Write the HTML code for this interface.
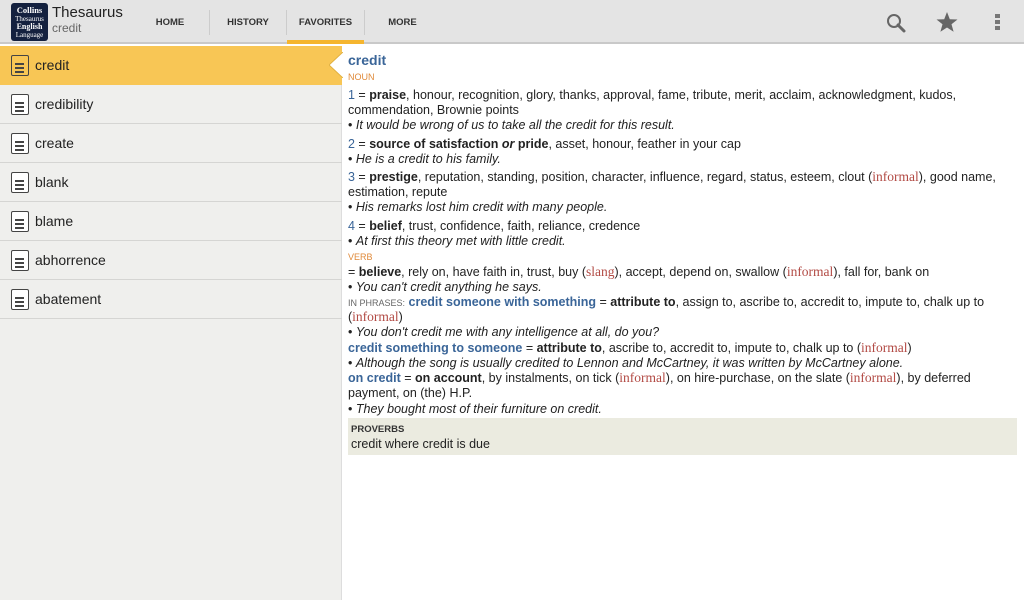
<!DOCTYPE html>
<html><head><meta charset="utf-8"><style>
*{margin:0;padding:0;box-sizing:border-box}
body{width:1024px;height:600px;overflow:hidden;font-family:"Liberation Sans",sans-serif;background:#fff;position:relative;color:#222}
.top{position:absolute;left:0;top:0;width:1024px;height:44px;background:#e4e4e4;border-bottom:2px solid #c9c9c9}
.logo{position:absolute;left:11px;top:3px;width:37px;height:38px;background:#14213f;border-radius:3px;color:#fff;font-family:"Liberation Serif",serif;text-align:center;line-height:8px;font-size:7px;padding-top:3px}
.tab{position:absolute;top:1px;height:44px;line-height:44px;font-size:9.5px;font-weight:bold;color:#333;text-align:center}
.sep{position:absolute;top:10px;width:1px;height:25px;background:#ccc}
.left{position:absolute;left:0;top:46px;width:342px;height:554px;background:#efefed;border-right:1px solid #ddd}
.row{position:absolute;left:0;width:342px;height:39px;border-bottom:1px solid #d5d5d3;font-size:14px;line-height:38px;padding-left:35px;color:#222}
.ic{position:absolute;left:11px;top:9px;width:18px;height:21px;border:1.5px solid #444;border-radius:2px;background:#fff}
.ic i{position:absolute;left:3px;width:9px;height:1.5px;background:#444}
.ln{position:absolute;left:348px;white-space:nowrap;font-size:12.5px;line-height:16px;color:#222;margin-top:1px}
.b{color:#3a6598}
.inf{font-family:"Liberation Serif",serif;color:#b24a44;font-size:13.5px}
.pos{color:#e08a3a}
em{font-style:italic}
</style></head><body>
<div class="top">
<div class="logo"><b style="font-size:8.5px">Collins</b><br>Thesaurus<br><b style="font-size:8px">English</b><br>Language</div>
<div style="position:absolute;left:52px;top:4px;font-size:15px;color:#222">Thesaurus</div>
<div style="position:absolute;left:52px;top:21px;font-size:12px;color:#666">credit</div>
<div class="tab" style="left:135px;width:70px">HOME</div>
<div class="sep" style="left:209px"></div>
<div class="tab" style="left:210px;width:76px">HISTORY</div>
<div class="sep" style="left:286px"></div>
<div class="tab" style="left:287px;width:77px">FAVORITES</div>
<div style="position:absolute;left:287px;top:40px;width:77px;height:4px;background:#f5b52e"></div>
<div class="sep" style="left:364px"></div>
<div class="tab" style="left:365px;width:75px">MORE</div>
<svg style="position:absolute;left:885px;top:12px" width="22" height="22" viewBox="0 0 22 22"><circle cx="9" cy="9" r="6" fill="none" stroke="#666" stroke-width="2"/><path d="M13 13L19 19" stroke="#666" stroke-width="3" stroke-linecap="round"/></svg>
<svg style="position:absolute;left:935px;top:11px" width="24" height="22" viewBox="0 0 24 22"><path d="M12 1L14.8 8.2 22.5 8.5 16.5 13.3 18.6 20.8 12 16.5 5.4 20.8 7.5 13.3 1.5 8.5 9.2 8.2Z" fill="#666"/></svg>
<div style="position:absolute;left:995px;top:14px;width:5px;height:4px;background:#777"></div>
<div style="position:absolute;left:995px;top:20px;width:5px;height:4px;background:#777"></div>
<div style="position:absolute;left:995px;top:26px;width:5px;height:4px;background:#777"></div>
</div>
<div class="left">
<div class="row" style="top:0;background:#f8c655;border-bottom:none">credit<div class="ic" style="background:#f8c655"><i style="top:7px"></i><i style="top:11px"></i><i style="top:15px"></i></div></div>
<div class="row" style="top:39px">credibility<div class="ic"><i style="top:7px"></i><i style="top:11px"></i><i style="top:15px"></i></div></div>
<div class="row" style="top:78px">create<div class="ic"><i style="top:7px"></i><i style="top:11px"></i><i style="top:15px"></i></div></div>
<div class="row" style="top:117px">blank<div class="ic"><i style="top:7px"></i><i style="top:11px"></i><i style="top:15px"></i></div></div>
<div class="row" style="top:156px">blame<div class="ic"><i style="top:7px"></i><i style="top:11px"></i><i style="top:15px"></i></div></div>
<div class="row" style="top:195px">abhorrence<div class="ic"><i style="top:7px"></i><i style="top:11px"></i><i style="top:15px"></i></div></div>
<div class="row" style="top:234px">abatement<div class="ic"><i style="top:7px"></i><i style="top:11px"></i><i style="top:15px"></i></div></div>
</div>
<svg style="position:absolute;left:329px;top:52px" width="14" height="26"><path d="M14 0L0 13 14 26Z" fill="#fff"/><path d="M14 0L0 13 14 26" fill="none" stroke="#e0b040" stroke-width="1"/></svg>
<div class="ln" style="top:51px;font-size:14px;font-weight:bold" ><span class="b">credit</span></div>
<div class="ln pos" style="top:68px;font-size:9px">NOUN</div>
<div class="ln" style="top:86px"><span class="b">1</span> = <b>praise</b>, honour, recognition, glory, thanks, approval, fame, tribute, merit, acclaim, acknowledgment, kudos,</div>
<div class="ln" style="top:101px">commendation, Brownie points</div>
<div class="ln" style="top:116px">• <em>It would be wrong of us to take all the credit for this result.</em></div>
<div class="ln" style="top:135px"><span class="b">2</span> = <b>source of satisfaction <em>or</em> pride</b>, asset, honour, feather in your cap</div>
<div class="ln" style="top:150px">• <em>He is a credit to his family.</em></div>
<div class="ln" style="top:168px"><span class="b">3</span> = <b>prestige</b>, reputation, standing, position, character, influence, regard, status, esteem, clout (<span class="inf">informal</span>), good name,</div>
<div class="ln" style="top:183px">estimation, repute</div>
<div class="ln" style="top:198px">• <em>His remarks lost him credit with many people.</em></div>
<div class="ln" style="top:217px"><span class="b">4</span> = <b>belief</b>, trust, confidence, faith, reliance, credence</div>
<div class="ln" style="top:232px">• <em>At first this theory met with little credit.</em></div>
<div class="ln pos" style="top:248px;font-size:9px">VERB</div>
<div class="ln" style="top:263px">= <b>believe</b>, rely on, have faith in, trust, buy (<span class="inf">slang</span>), accept, depend on, swallow (<span class="inf">informal</span>), fall for, bank on</div>
<div class="ln" style="top:278px">• <em>You can't credit anything he says.</em></div>
<div class="ln" style="top:293px"><span style="font-size:9px;color:#666">IN PHRASES:</span> <b class="b">credit someone with something</b> = <b>attribute to</b>, assign to, ascribe to, accredit to, impute to, chalk up to</div>
<div class="ln" style="top:308px">(<span class="inf">informal</span>)</div>
<div class="ln" style="top:323px">• <em>You don't credit me with any intelligence at all, do you?</em></div>
<div class="ln" style="top:339px"><b class="b">credit something to someone</b> = <b>attribute to</b>, ascribe to, accredit to, impute to, chalk up to (<span class="inf">informal</span>)</div>
<div class="ln" style="top:354px">• <em>Although the song is usually credited to Lennon and McCartney, it was written by McCartney alone.</em></div>
<div class="ln" style="top:369px"><b class="b">on credit</b> = <b>on account</b>, by instalments, on tick (<span class="inf">informal</span>), on hire-purchase, on the slate (<span class="inf">informal</span>), by deferred</div>
<div class="ln" style="top:384px">payment, on (the) H.P.</div>
<div class="ln" style="top:400px">• <em>They bought most of their furniture on credit.</em></div>
<div style="position:absolute;left:348px;top:418px;width:669px;height:37px;background:#ebebe0"></div>
<div class="ln" style="top:421px;left:351px;font-size:9.5px;font-weight:bold;color:#333">PROVERBS</div>
<div class="ln" style="top:435px;left:351px">credit where credit is due</div>
</body></html>
